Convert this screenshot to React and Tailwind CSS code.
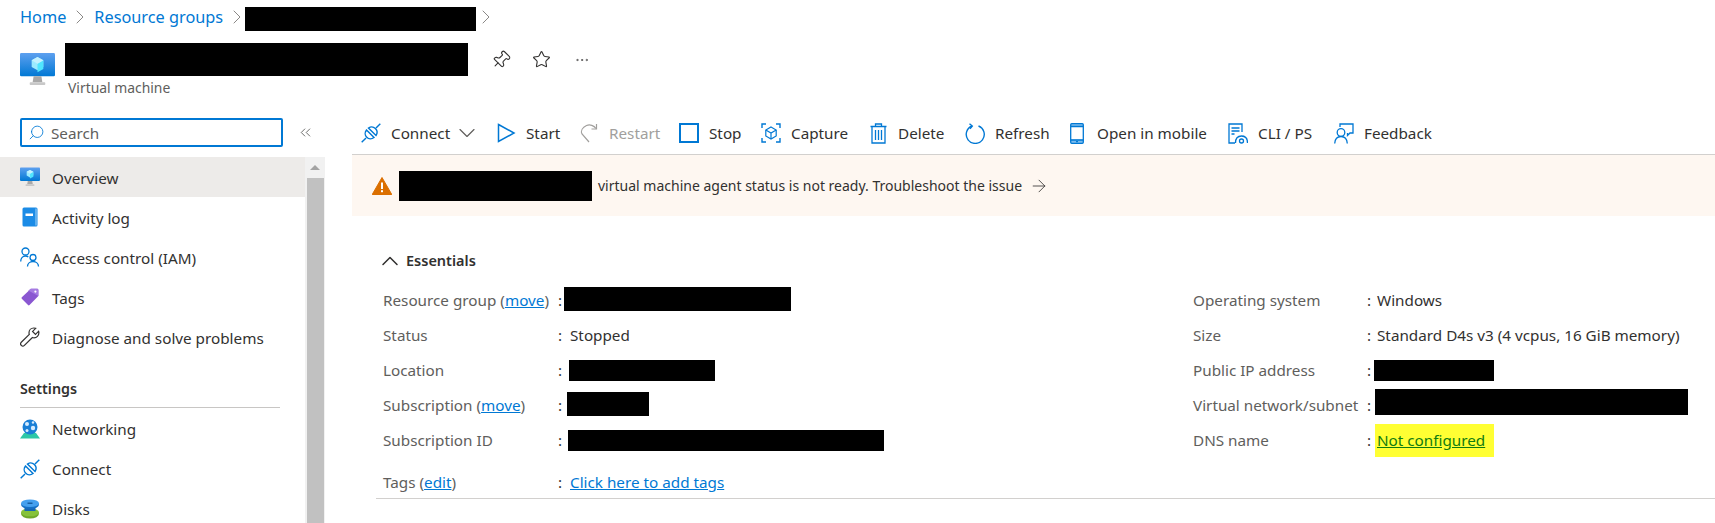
import React from "react";
import { ChevronRight, ChevronDown, ChevronUp, ChevronsLeft, Search, Pin, Star, MoreHorizontal, ArrowRight } from "lucide-react";

const blue = "#0078d4";

const VmIcon = ({ size = 35, id }) => (
  <svg width={size} height={size} viewBox="0 0 18 18">
    <defs>
      <linearGradient id={id} x1="0" y1="0" x2="0" y2="1">
        <stop offset="0" stopColor="#5ea0ef" />
        <stop offset="1" stopColor="#0078d4" />
      </linearGradient>
    </defs>
    <rect x="0" y="0.5" width="18" height="12" rx="0.7" fill={`url(#${id})`} />
    <path d="M9 2.6l3 1.7v3.4l-3 1.7-3-1.7V4.300z" fill="#9cebff" />
    <path d="M9 6v4.400l3-1.700V4.300z" fill="#50e6ff" />
    <path d="M9 6L6 4.300l3-1.700 3 1.700z" fill="#c3f1ff" />
    <path d="M7 12.500h4l.5 3H6.500z" fill="#a8a8a8" />
    <rect x="5" y="15.500" width="8" height="1.500" rx="0.4" fill="#c8c8c8" />
  </svg>
);

const PlugIcon = ({ size = 20 }) => (
  <svg width={size} height={size} viewBox="0 0 20 20" fill="none" stroke={blue} strokeWidth="1.400">
    <path d="M0.700 19.300L5 15" />
    <path d="M5.500 7L13 14.500C10.800 16.300 7.700 16.300 5.800 14.200C3.700 12.300 3.700 9.200 5.500 7Z" />
    <path d="M7.500 5C9.700 3.500 12.500 3.700 14.400 5.600C16.300 7.500 16.500 10.300 15 12.500Z" />
    <path d="M15 5L19.300 0.700" />
  </svg>
);

const PlayIcon = () => (
  <svg width="19" height="20" viewBox="0 0 19 20" fill="none" stroke={blue} strokeWidth="1.500">
    <path d="M1.500 1.500L17 10L1.500 18.500Z" />
  </svg>
);

const RestartIcon = () => (
  <svg width="18" height="20" viewBox="0 0 18 20" fill="none" stroke="#a19f9d" strokeWidth="1.200">
    <path d="M16 5.500C14 2.500 10 1 6.500 2.500C2.500 4.500 0.500 8 2 11L9 19" />
    <path d="M16.500 1v5h-5" />
  </svg>
);

const StopIcon = () => <span className="block w-[20px] h-[20px] border-2 border-[#0078d4] -ml-[1px]" />;

const CaptureIcon = () => (
  <svg width="20" height="20" viewBox="0 0 20 20" fill="none" stroke={blue} strokeWidth="1.200">
    <path d="M1 5V1h4M15 1h4v4M19 15v4h-4M5 19H1v-4" strokeWidth="1.400" />
    <path d="M10 4l5.200 3v6L10 16l-5.200-3V7z" />
    <path d="M4.800 7L10 10l5.200-3M10 10v6" />
  </svg>
);

const TrashIcon = () => (
  <svg width="17" height="21" viewBox="0 0 17 21" fill="none" stroke={blue} strokeWidth="1.300">
    <path d="M0.500 3.500h16M5.500 3.500V1h6v2.500" />
    <path d="M2 3.500V20h13V3.500" />
    <path d="M5.500 7v10M8.500 7v10M11.500 7v10" />
  </svg>
);

const RefreshIcon = () => (
  <svg width="20" height="21" viewBox="0 0 20 21" fill="none" stroke={blue} strokeWidth="1.400">
    <path d="M7 3A9 9 0 1 0 13.500 3" />
    <path d="M4.500 0.700L7.300 3L5 5.800" />
  </svg>
);

const MobileIcon = () => (
  <svg width="14" height="21" viewBox="0 0 14 21" fill="none" stroke={blue} strokeWidth="1.300">
    <path d="M1 1h12v3H1zM1 16.500h12V20H1z" fill="#7cbcee" stroke="none" />
    <rect x="0.700" y="0.700" width="12.600" height="19.600" rx="1" />
    <path d="M0.700 3.500h12.600M0.700 17h12.600" />
    <path d="M6 18.700h2" />
  </svg>
);

const CliIcon = () => (
  <svg width="20" height="21" viewBox="0 0 20 21" fill="none" stroke={blue} strokeWidth="1.300">
    <path d="M7 20H1V1h13v8" />
    <path d="M3.500 5h8M3.500 8h8M3.500 11h3" />
    <path d="M7.500 20C7.500 15.500 10 13 13.500 13S19.500 15.500 19.500 20" />
    <circle cx="13.500" cy="18" r="2" />
  </svg>
);

const FeedbackIcon = () => (
  <svg width="20" height="21" viewBox="0 0 20 21" fill="none" stroke={blue} strokeWidth="1.300">
    <circle cx="7" cy="9.500" r="3.800" />
    <path d="M0.700 20.500C1 16 3.500 13.500 7 13.500S13 16 13.300 20.500" />
    <path d="M6 4V1h13v9h-3l-2.500 2.500V10" />
  </svg>
);

const BookIcon = () => (
  <svg width="16" height="20" viewBox="0 0 16 20">
    <rect x="0.500" y="0.500" width="15" height="19" rx="1.500" fill="#1b8be6" />
    <path d="M14 1.500V18.500" stroke="#a6d4f7" strokeWidth="1" />
    <rect x="3.500" y="6.500" width="7.500" height="2.500" fill="#ffffff" />
  </svg>
);

const PeopleIcon = () => (
  <svg width="20" height="20" viewBox="0 0 20 20" fill="none" stroke={blue} strokeWidth="1.300">
    <circle cx="5.500" cy="4.500" r="3.500" />
    <path d="M0.700 14.500C0.700 11 3 9 5.500 9c1 0 2 .3 2.800 1" />
    <circle cx="13" cy="10.500" r="3" />
    <path d="M7.500 19.500C7.500 16.500 10 14.500 13 14.500S18.500 16.500 18.500 19.500" />
  </svg>
);

const TagIcon = () => (
  <svg width="18" height="18" viewBox="0 0 20 20">
    <path d="M11 0.800L18 0.800C18.800 0.800 19.300 1.300 19.300 2L19.300 9L9.500 19C9 19.500 8.300 19.500 7.800 19L0.900 12C0.400 11.500 0.400 10.800 0.900 10.300Z" fill="#8a57d1" />
    <path d="M11 0.800L18 0.800L19.300 2L19.300 9L8 2.800Z" fill="#a67be2" />
    <circle cx="16" cy="4" r="1.200" fill="#ffffff" />
  </svg>
);

const WrenchIcon = () => (
  <svg width="20" height="20" viewBox="0 0 20 20" fill="none" stroke="#323130" strokeWidth="1.200">
    <path d="M13.800 1C11 1 9 3 9 5.700C9 6.300 9.100 6.900 9.300 7.400L1.300 15.300C0.400 16.200 0.400 17.500 1.300 18.400C2.200 19.300 3.500 19.300 4.400 18.400L12.400 10.500C12.900 10.700 13.400 10.800 14 10.800C16.700 10.800 18.900 8.600 18.900 5.800C18.900 5.200 18.800 4.700 18.600 4.200L15.500 7.300L12.600 4.400L15.700 1.300C15.100 1.100 14.500 1 13.800 1Z" />
  </svg>
);

const GlobeIcon = () => (
  <svg width="20" height="20" viewBox="0 0 20 20">
    <path d="M4 14h12l4 5.500H0z" fill="#2dc7a6" />
    <circle cx="10" cy="8" r="7.500" fill="#1a7fd6" />
    <circle cx="7" cy="5" r="2" fill="#d6ecff" />
    <circle cx="13" cy="9" r="2.200" fill="#d6ecff" />
    <circle cx="7" cy="11.500" r="1.500" fill="#d6ecff" />
    <circle cx="13" cy="3.500" r="1.200" fill="#d6ecff" />
  </svg>
);

const DisksIcon = () => (
  <svg width="20" height="20" viewBox="0 0 20 20">
    <ellipse cx="10" cy="14.800" rx="9" ry="4.800" fill="#6fa82a" />
    <ellipse cx="10" cy="13.300" rx="9" ry="4" fill="#86c23a" />
    <rect x="4.500" y="8" width="11" height="4" fill="#1565b5" />
    <ellipse cx="10" cy="5.800" rx="9" ry="4" fill="#1670c4" />
    <ellipse cx="10" cy="4.300" rx="9" ry="3.800" fill="#45a0ee" />
    <rect x="7.500" y="3.600" width="5" height="1.200" fill="#0d4f8f" />
  </svg>
);

const toolbarItems = [
  { label: "Connect", icon: <PlugIcon />, width: "w-[135px]", chevron: true },
  { label: "Start", icon: <PlayIcon />, width: "w-[83px]" },
  { label: "Restart", icon: <RestartIcon />, width: "w-[100px]", disabled: true },
  { label: "Stop", icon: <StopIcon />, width: "w-[82px]" },
  { label: "Capture", icon: <CaptureIcon />, width: "w-[107px]" },
  { label: "Delete", icon: <TrashIcon />, width: "w-[97px]" },
  { label: "Refresh", icon: <RefreshIcon />, width: "w-[102px]" },
  { label: "Open in mobile", icon: <MobileIcon />, width: "w-[161px]" },
  { label: "CLI / PS", icon: <CliIcon />, width: "w-[106px]" },
  { label: "Feedback", icon: <FeedbackIcon />, width: "w-[100px]" },
];

const NavItem = ({ icon, label, active, low }) => (
  <div className={`flex items-center h-[40px] pl-[20px] ${active ? "bg-[#edebe9]" : ""}`}>
    <span className="w-[20px] h-[20px] flex items-center justify-center shrink-0">{icon}</span>
    <span className={`ml-[12px] text-[#323130] ${low ? "mt-[2px]" : ""}`}>{label}</span>
  </div>
);

const Redact = ({ className }) => <div className={`bg-black ${className}`} />;

const Row = ({ label, right, children }) => (
  <div className={`grid h-[35px] items-center ${right ? "grid-cols-[174px_4px_1fr]" : "grid-cols-[175px_4px_1fr]"}`}>
    <div className="text-[#605e5c] whitespace-nowrap">{label}</div>
    <div className="text-[#323130]">:</div>
    <div className="min-w-0">{children}</div>
  </div>
);

const Move = ({ children }) => (
  <>
    (<a className="text-[#0078d4] underline">{children}</a>)
  </>
);

export default function App() {
  return (
    <div className="w-[1715px] h-[523px] overflow-hidden bg-white text-[15.25px] font-['Noto_Sans',sans-serif] text-[#323130]">
      <div className="flex items-center h-[24px] mt-[7px] pl-[20px] text-[#0078d4] text-[16.3px]">
        <a className="-mt-[4px]">Home</a>
        <ChevronRight size={24} strokeWidth={1} className="text-[#8a8886] ml-[2px] mr-[2px] -mt-[4px]" />
        <a className="-mt-[4px]">Resource groups</a>
        <ChevronRight size={24} strokeWidth={1} className="text-[#8a8886] ml-[2px] -mr-[4px] -mt-[4px]" />
        <Redact className="w-[231px] h-[24px] relative" />
        <ChevronRight size={24} strokeWidth={1} className="text-[#8a8886] -ml-[2px] -mt-[4px]" />
      </div>

      <div className="flex mt-[12px] pl-[20px] h-[69px]">
        <div className="mt-[9px] w-[35px]">
          <VmIcon id="vmBig" />
        </div>
        <div className="ml-[10px]">
          <Redact className="w-[403px] h-[33px]" />
          <div className="ml-[3px] mt-[2px] text-[13.9px] text-[#605e5c]">Virtual machine</div>
        </div>
        <div className="flex items-center h-[33px] ml-[23px]">
          <Pin size={20} strokeWidth={1.3} className="rotate-45 text-[#323130]" />
          <Star size={19} strokeWidth={1.4} className="text-[#323130] ml-[21px]" />
          <MoreHorizontal size={16} strokeWidth={1} className="text-[#323130] ml-[23px]" />
        </div>
      </div>

      <div className="flex mt-[0px]">
        <aside className="w-[352px] shrink-0">
          <div className="flex h-[45px] pl-[20px] pt-[6px]">
            <div className="flex items-center w-[263px] h-[29px] border-2 border-[#0078d4] rounded-[2px] pl-[6px]">
              <Search size={17} strokeWidth={1.2} className="text-[#0078d4] -scale-x-100" />
              <span className="ml-[6px] mt-[1px] text-[#605e5c]">Search</span>
            </div>
            <ChevronsLeft size={17} strokeWidth={1} className="text-[#323130] ml-[14px] mt-[6px]" />
          </div>
          <div className="flex w-[325px]">
            <nav className="w-[305px]">
              <NavItem low active icon={<VmIcon id="vmSmall" size={20} />} label="Overview" />
              <NavItem low icon={<BookIcon />} label="Activity log" />
              <NavItem low icon={<PeopleIcon />} label="Access control (IAM)" />
              <NavItem low icon={<TagIcon />} label="Tags" />
              <NavItem low icon={<WrenchIcon />} label="Diagnose and solve problems" />
              <div className="pl-[20px] pt-[22px] w-[280px]">
                <div className="font-semibold h-[28px] leading-[20px] text-[14.3px]">Settings</div>
                <div className="border-b border-[#c8c6c4]" />
              </div>
              <div className="h-[1px]" />
              <NavItem icon={<GlobeIcon />} label="Networking" />
              <NavItem icon={<PlugIcon />} label="Connect" />
              <NavItem icon={<DisksIcon />} label="Disks" />
            </nav>
            <div className="w-[20px] bg-[#f1f1f1] flex flex-col items-center">
              <div className="h-[21px] pt-[8px]">
                <div className="w-0 h-0 border-l-[5px] border-r-[5px] border-b-[5px] border-l-transparent border-r-transparent border-b-[#a3a3a3]" />
              </div>
              <div className="flex-1 w-[17px] bg-[#c1c1c1]" />
            </div>
          </div>
        </aside>

        <main className="flex-1 min-w-0">
          <div className="flex items-center h-[42px] pl-[9px] border-b border-[#d2d0ce] box-content">
            {toolbarItems.map((item) => (
              <div key={item.label} className={`flex items-center shrink-0 ${item.width}`}>
                <span className="w-[20px] h-[22px] flex items-center justify-center shrink-0">{item.icon}</span>
                <span className={`ml-[10px] ${item.disabled ? "text-[#a19f9d]" : "text-[#323130]"}`}>{item.label}</span>
                {item.chevron && <ChevronDown size={28} strokeWidth={1} className="text-[#605e5c] ml-[3px] shrink-0" />}
              </div>
            ))}
          </div>

          <div className="flex items-center h-[61px] bg-[#fef7f1] pl-[20px]">
            <svg width="20" height="18" viewBox="0 0 20 18">
              <path d="M10 0.500L19.800 17.500H0.200Z" fill="#db6f00" stroke="#db6f00" strokeLinejoin="round" />
              <rect x="9" y="5.500" width="2" height="6.500" fill="#fff" />
              <rect x="9" y="13.200" width="2" height="2" fill="#fff" />
            </svg>
            <Redact className="w-[193px] h-[30px] ml-[7px]" />
            <span className="ml-[6px] text-[14px]">virtual machine agent status is not ready. Troubleshoot the issue</span>
            <ArrowRight size={20} strokeWidth={1} className="ml-[7px]" />
          </div>

          <div className="flex items-center h-[24px] mt-[33px] ml-[24px] font-semibold text-[14.5px]">
            <ChevronUp size={28} strokeWidth={1.3} className="shrink-0" />
            <span className="ml-[2px]">Essentials</span>
          </div>

          <div className="grid grid-cols-[810px_1fr] mt-[10px] pl-[31px]">
            <div>
              <Row label={<>Resource group <Move>move</Move></>}>
                <Redact className="w-[227px] h-[24px] -mt-[3px] ml-[2px]" />
              </Row>
              <Row label="Status"><span className="pl-[8px] text-[#323130]">Stopped</span></Row>
              <Row label="Location"><Redact className="w-[146px] h-[21px] ml-[7px]" /></Row>
              <Row label={<>Subscription <Move>move</Move></>}>
                <Redact className="w-[82px] h-[24px] ml-[5px] -mt-[3px]" />
              </Row>
              <Row label="Subscription ID"><Redact className="w-[316px] h-[21px] ml-[6px]" /></Row>
            </div>
            <div>
              <Row right label="Operating system"><span className="pl-[6px]">Windows</span></Row>
              <Row right label="Size"><span className="pl-[6px] whitespace-nowrap">Standard D4s v3 (4 vcpus, 16 GiB memory)</span></Row>
              <Row right label="Public IP address"><Redact className="w-[120px] h-[21px] ml-[3px]" /></Row>
              <Row right label="Virtual network/subnet"><Redact className="w-[313px] h-[26px] ml-[4px] -mt-[7px]" /></Row>
              <Row right label="DNS name">
                <div className="flex items-center w-[119px] h-[33px] ml-[4px] pl-[2px] bg-[#ffff33] text-[#107c10] underline whitespace-nowrap">Not configured</div>
              </Row>
            </div>
          </div>

          <div className="mt-[7px] pl-[31px] h-[33px]">
            <Row label={<>Tags <Move>edit</Move></>}>
              <a className="pl-[8px] text-[#0078d4] underline">Click here to add tags</a>
            </Row>
          </div>
          <div className="ml-[24px] border-b border-[#d2d0ce]" />
        </main>
      </div>
    </div>
  );
}
